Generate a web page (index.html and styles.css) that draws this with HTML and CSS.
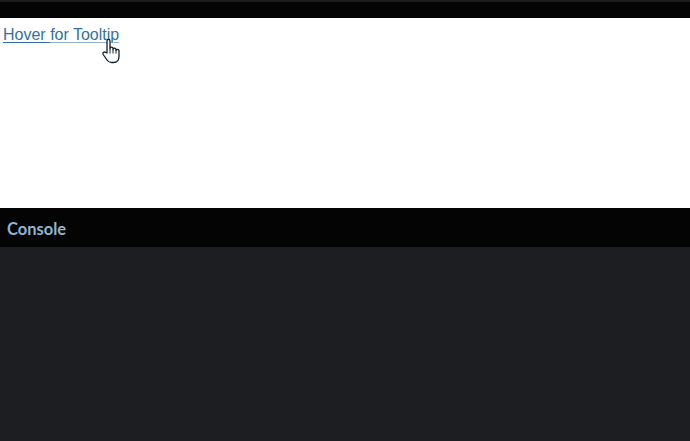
FILE: index.html
```html
<!DOCTYPE html>
<html lang="en">
<head>
    <meta charset="UTF-8">
    <title>Tooltip</title>
    <link rel="stylesheet" href="styles.css">
</head>
<body>
<div class="topBar"></div>
<div class="preview">
    <a class="tipLink" href="#"><span class="tipStart">Hover </span><span class="tipEnd">for Tooltip</span></a>
    <svg class="cursor" width="18" height="26" viewBox="0 0 18 26">
        <path d="M5 15V3c0-2.300 3-2.300 3 0v7.500c0-1.800 3-1.800 3 0v1c0-1.800 3-1.800 3 0v1c0-1.500 3-1.500 3 0v6c0 3.500-2 6-5.500 6H9.500c-2 0-3.500-1-4.500-2.500L1.200 16.500c-1-1.800 1.300-3.300 2.400-2z" fill="#fff" stroke="#12202e" stroke-width="1.300" stroke-linejoin="round"/>
        <path d="M8 10.500v5M11 11.500v4M14 12.500v3" fill="none" stroke="#12202e" stroke-width="1"/>
    </svg>
</div>
<div class="consoleHead">Console</div>
<div class="consoleBody"></div>
</body>
</html>
```

FILE: styles.css
```css
html, body {
    margin: 0;
    height: 100%;
}

body {
    display: flex;
    flex-direction: column;
    background-color: #1d1e22;
}

.topBar {
    height: 18px;
    box-sizing: border-box;
    background-color: #040405;
    border-top: 2px solid #1d1e22;
}

.preview {
    position: relative;
    height: 190px;
    padding: 8px 3px 0;
    box-sizing: border-box;
    background-color: #fff;
    font: 16px/17px "Liberation Sans", Arial, sans-serif;
}

.tipLink {
    color: #33729f;
    text-decoration: none;
}

.tipStart {
    text-decoration: underline 1px #33729f;
    text-underline-offset: 2px;
}

.tipEnd {
    text-decoration: underline 1px #8fb3cc;
    text-underline-offset: 2px;
}

.cursor {
    position: absolute;
    left: 102px;
    top: 20px;
}

.consoleHead {
    height: 39px;
    padding-left: 7px;
    box-sizing: border-box;
    background-color: #040405;
    color: #8fb4d2;
    font: bold 16.5px/43px Lato, sans-serif;
}

.consoleBody {
    flex: 1;
    background-color: #1d1e22;
}
```
